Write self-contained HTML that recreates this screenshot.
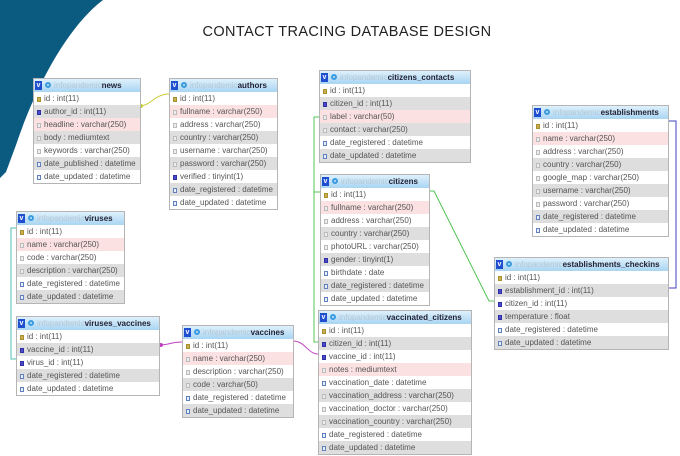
<!DOCTYPE html>
<html><head><meta charset="utf-8"><style>
*{margin:0;padding:0;box-sizing:border-box}
body{width:680px;height:456px;background:#fff;position:relative;overflow:hidden;font-family:"Liberation Sans",sans-serif}
.title{position:absolute;left:0;width:694px;top:24px;text-align:center;font-size:14.5px;letter-spacing:0.4px;color:#222}
.t{position:absolute;border:1px solid #b5b5b5;background:#fff;font-size:8px;color:#555}
.h{height:13px;line-height:13px;background:linear-gradient(#dff0fc,#a8d5f2);white-space:nowrap;overflow:hidden;font-size:8px}
.h .v{display:inline-block;width:7px;height:9px;background:#1f4fcf;color:#fff;font-size:7px;font-weight:bold;text-align:center;line-height:9px;margin:2px 2px 0 1px;vertical-align:top}
.h .c{display:inline-block;width:6px;height:6px;border:2px solid #3a9be0;border-radius:50%;margin:3px 3px 0 1px;vertical-align:top}
.h .db{color:#b8c8d4}
.h b{color:#223}
.r{height:13px;line-height:13px;padding-left:3px;white-space:nowrap;overflow:hidden}
.g{background:#dedede}.p{background:#fbe1e1}
.r i{display:inline-block;width:4px;height:5px;margin-right:3px;vertical-align:-1px;border:1px solid #bbb;background:#eee}
.r i.k{background:#c8b050;border-color:#a89030}
.r i.f{background:#4a4ad0;border-color:#3030a0}
.r i.d{background:#e8eefc;border-color:#6080c0}
</style></head><body>
<svg style="position:absolute;left:0;top:0" width="680" height="456">
<path d="M0 0 H103 C70 25 38 80 16 145 L6 172 L0 178 Z" fill="#0b5a7f"/>
<path d="M140 106 C150 106 155 94 169 94" stroke="#c8cc30" fill="none" stroke-width="1"/>
<circle cx="141" cy="106" r="2" fill="#c8cc30"/>
<path d="M320 117 H314 V342 H320 M314 192 H320" stroke="#55c455" fill="none"/>
<path d="M429 191 H434 L489 301 H494" stroke="#55c455" fill="none"/>
<path d="M16 228 H11 V359 H16" stroke="#4cc0b0" fill="none"/>
<path d="M160 345 C168 345 172 342 182 342" stroke="#c040c0" fill="none"/>
<circle cx="161" cy="345" r="2" fill="#c040c0"/>
<path d="M293 341 C305 341 308 354 318 354" stroke="#c040c0" fill="none"/>
<path d="M668 121 H676 V288 H669" stroke="#4040c0" fill="none"/>
</svg>
<div class="title">CONTACT TRACING DATABASE DESIGN</div>

<div class="t" style="left:33px;top:78px;width:108px">
<div class="h"><span class="v">v</span><span class="c"></span><span class="db">infopandemic</span><b>news</b></div>
<div class="r"><i class="k"></i>id : int(11)</div>
<div class="r g"><i class="f"></i>author_id : int(11)</div>
<div class="r p"><i></i>headline : varchar(250)</div>
<div class="r g"><i></i>body : mediumtext</div>
<div class="r"><i></i>keywords : varchar(250)</div>
<div class="r g"><i class="d"></i>date_published : datetime</div>
<div class="r"><i class="d"></i>date_updated : datetime</div>
</div>

<div class="t" style="left:169px;top:78px;width:109px">
<div class="h"><span class="v">v</span><span class="c"></span><span class="db">infopandemic</span><b>authors</b></div>
<div class="r"><i class="k"></i>id : int(11)</div>
<div class="r p"><i></i>fullname : varchar(250)</div>
<div class="r"><i></i>address : varchar(250)</div>
<div class="r g"><i></i>country : varchar(250)</div>
<div class="r"><i></i>username : varchar(250)</div>
<div class="r g"><i></i>password : varchar(250)</div>
<div class="r"><i class="f"></i>verified : tinyint(1)</div>
<div class="r g"><i class="d"></i>date_registered : datetime</div>
<div class="r"><i class="d"></i>date_updated : datetime</div>
</div>

<div class="t" style="left:319px;top:70px;width:152px">
<div class="h"><span class="v">v</span><span class="c"></span><span class="db">infopandemic</span><b>citizens_contacts</b></div>
<div class="r"><i class="k"></i>id : int(11)</div>
<div class="r g"><i class="f"></i>citizen_id : int(11)</div>
<div class="r p"><i></i>label : varchar(50)</div>
<div class="r g"><i></i>contact : varchar(250)</div>
<div class="r"><i class="d"></i>date_registered : datetime</div>
<div class="r g"><i class="d"></i>date_updated : datetime</div>
</div>

<div class="t" style="left:320px;top:174px;width:110px">
<div class="h"><span class="v">v</span><span class="c"></span><span class="db">infopandemic</span><b>citizens</b></div>
<div class="r"><i class="k"></i>id : int(11)</div>
<div class="r p"><i></i>fullname : varchar(250)</div>
<div class="r"><i></i>address : varchar(250)</div>
<div class="r g"><i></i>country : varchar(250)</div>
<div class="r"><i></i>photoURL : varchar(250)</div>
<div class="r g"><i class="f"></i>gender : tinyint(1)</div>
<div class="r"><i class="d"></i>birthdate : date</div>
<div class="r g"><i class="d"></i>date_registered : datetime</div>
<div class="r"><i class="d"></i>date_updated : datetime</div>
</div>

<div class="t" style="left:532px;top:105px;width:137px">
<div class="h"><span class="v">v</span><span class="c"></span><span class="db">infopandemic</span><b>establishments</b></div>
<div class="r"><i class="k"></i>id : int(11)</div>
<div class="r p"><i></i>name : varchar(250)</div>
<div class="r"><i></i>address : varchar(250)</div>
<div class="r g"><i></i>country : varchar(250)</div>
<div class="r"><i></i>google_map : varchar(250)</div>
<div class="r g"><i></i>username : varchar(250)</div>
<div class="r"><i></i>password : varchar(250)</div>
<div class="r g"><i class="d"></i>date_registered : datetime</div>
<div class="r"><i class="d"></i>date_updated : datetime</div>
</div>

<div class="t" style="left:16px;top:211px;width:109px">
<div class="h"><span class="v">v</span><span class="c"></span><span class="db">infopandemic</span><b>viruses</b></div>
<div class="r"><i class="k"></i>id : int(11)</div>
<div class="r p"><i></i>name : varchar(250)</div>
<div class="r"><i></i>code : varchar(250)</div>
<div class="r g"><i></i>description : varchar(250)</div>
<div class="r"><i class="d"></i>date_registered : datetime</div>
<div class="r g"><i class="d"></i>date_updated : datetime</div>
</div>

<div class="t" style="left:16px;top:316px;width:144px">
<div class="h"><span class="v">v</span><span class="c"></span><span class="db">infopandemic</span><b>viruses_vaccines</b></div>
<div class="r"><i class="k"></i>id : int(11)</div>
<div class="r g"><i class="f"></i>vaccine_id : int(11)</div>
<div class="r"><i class="f"></i>virus_id : int(11)</div>
<div class="r g"><i class="d"></i>date_registered : datetime</div>
<div class="r"><i class="d"></i>date_updated : datetime</div>
</div>

<div class="t" style="left:182px;top:325px;width:112px">
<div class="h"><span class="v">v</span><span class="c"></span><span class="db">infopandemic</span><b>vaccines</b></div>
<div class="r"><i class="k"></i>id : int(11)</div>
<div class="r p"><i></i>name : varchar(250)</div>
<div class="r"><i></i>description : varchar(250)</div>
<div class="r g"><i></i>code : varchar(50)</div>
<div class="r"><i class="d"></i>date_registered : datetime</div>
<div class="r g"><i class="d"></i>date_updated : datetime</div>
</div>

<div class="t" style="left:318px;top:310px;width:154px">
<div class="h"><span class="v">v</span><span class="c"></span><span class="db">infopandemic</span><b>vaccinated_citizens</b></div>
<div class="r"><i class="k"></i>id : int(11)</div>
<div class="r g"><i class="f"></i>citizen_id : int(11)</div>
<div class="r"><i class="f"></i>vaccine_id : int(11)</div>
<div class="r p"><i></i>notes : mediumtext</div>
<div class="r"><i class="d"></i>vaccination_date : datetime</div>
<div class="r g"><i></i>vaccination_address : varchar(250)</div>
<div class="r"><i></i>vaccination_doctor : varchar(250)</div>
<div class="r g"><i></i>vaccination_country : varchar(250)</div>
<div class="r"><i class="d"></i>date_registered : datetime</div>
<div class="r g"><i class="d"></i>date_updated : datetime</div>
</div>

<div class="t" style="left:494px;top:257px;width:175px">
<div class="h"><span class="v">v</span><span class="c"></span><span class="db">infopandemic</span><b>establishments_checkins</b></div>
<div class="r"><i class="k"></i>id : int(11)</div>
<div class="r g"><i class="f"></i>establishment_id : int(11)</div>
<div class="r"><i class="f"></i>citizen_id : int(11)</div>
<div class="r g"><i class="f"></i>temperature : float</div>
<div class="r"><i class="d"></i>date_registered : datetime</div>
<div class="r g"><i class="d"></i>date_updated : datetime</div>
</div>
</body></html>
